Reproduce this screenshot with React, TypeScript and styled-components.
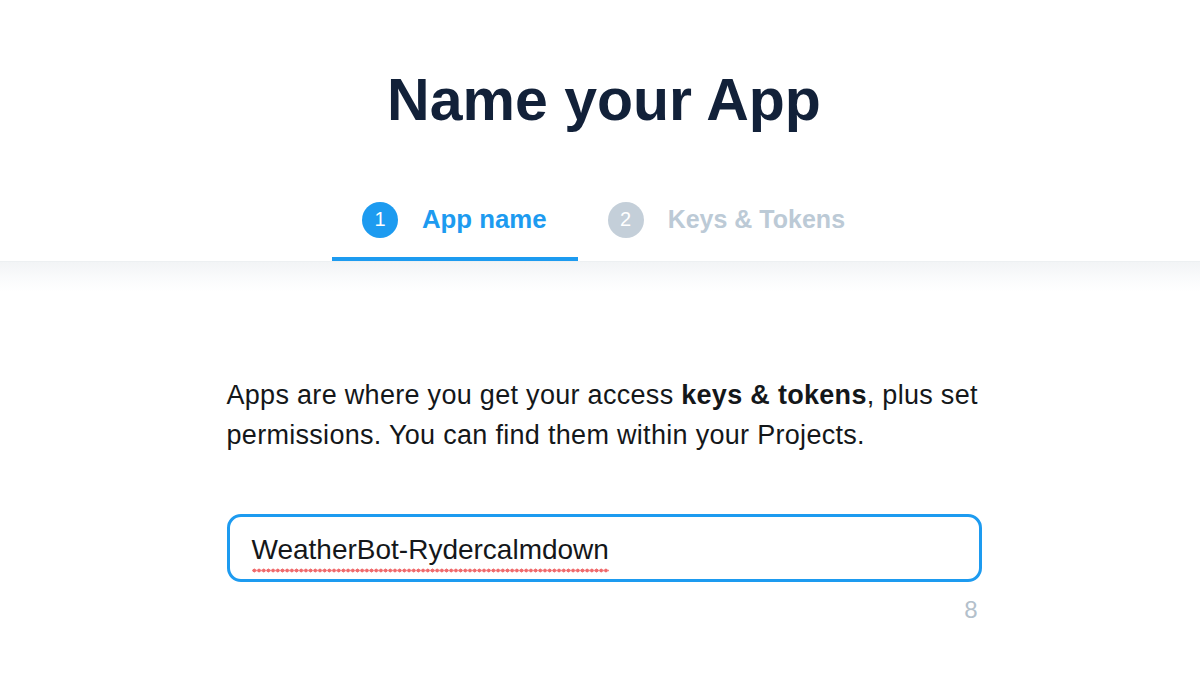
import React from "react";
import styled, { createGlobalStyle } from "styled-components";

const GlobalStyle = createGlobalStyle`
  html, body { margin: 0; padding: 0; background: #ffffff; }
  body { font-family: "Liberation Sans", Arial, sans-serif; -webkit-font-smoothing: antialiased; }
`;

const Page = styled.div`
  width: 1200px;
  min-height: 675px;
  display: flex;
  flex-direction: column;
`;

const Header = styled.header`
  display: flex;
  flex-direction: column;
  align-items: center;
  padding-top: 66px;
  padding-left: 8px;
  box-sizing: border-box;
  border-bottom: 1px solid #edf0f2;
`;

const Title = styled.h1`
  margin: 0;
  font-size: 59px;
  line-height: 68px;
  font-weight: 700;
  color: #122139;
`;

const Tabs = styled.nav`
  display: flex;
  margin-top: 52px;
`;

const Tab = styled.div<{ $active?: boolean }>`
  display: flex;
  align-items: center;
  gap: 24px;
  padding: 0 31px 4px 30px;
  height: 75px;
  box-sizing: border-box;
  border-bottom: 4px solid ${(p) => (p.$active ? "#1d9bf0" : "transparent")};
`;

const StepNum = styled.span<{ $active?: boolean }>`
  width: 36px;
  height: 36px;
  border-radius: 50%;
  background: ${(p) => (p.$active ? "#1d9bf0" : "#c4cfd9")};
  color: #ffffff;
  display: flex;
  align-items: center;
  justify-content: center;
  font-size: 20px;
  font-weight: 400;
`;

const TabLabel = styled.span<{ $active?: boolean }>`
  font-size: ${(p) => (p.$active ? "25.8px" : "25px")};
  font-weight: 700;
  color: ${(p) => (p.$active ? "#1d9bf0" : "#bccad6")};
`;

const Shade = styled.div`
  height: 30px;
  background: linear-gradient(to bottom, #f2f4f6 0%, #fafbfc 55%, #ffffff 100%);
`;

const Content = styled.main`
  width: 755px;
  margin-left: 8px;
  align-self: center;
  display: flex;
  flex-direction: column;
  padding-top: 83px;
`;

const Intro = styled.p`
  margin: 0;
  font-size: 27px;
  line-height: 40px;
  letter-spacing: 0.3px;
  color: #14171a;
  strong { font-weight: 700; }
`;

const Field = styled.div`
  margin-top: 59px;
  height: 68px;
  border: 3px solid #1d9bf0;
  border-radius: 14px;
  box-sizing: border-box;
  display: flex;
  align-items: center;
  padding: 3px 22px 0;
  font-size: 28px;
  color: #14171a;
`;

const Misspelled = styled.span`
  padding-bottom: 7px;
  margin-bottom: -7px;
  background-image: radial-gradient(circle, #f06b6d 1.8px, transparent 2.2px);
  background-size: 4.7px 5px;
  background-repeat: repeat-x;
  background-position: 0 100%;
`;

const Counter = styled.div`
  align-self: flex-end;
  margin-top: 14px;
  margin-right: 4px;
  font-size: 24px;
  color: #b3c0cb;
`;

export default function App() {
  return (
    <>
      <GlobalStyle />
      <Page>
        <Header>
          <Title>Name your App</Title>
          <Tabs>
            <Tab $active>
              <StepNum $active>1</StepNum>
              <TabLabel $active>App name</TabLabel>
            </Tab>
            <Tab>
              <StepNum>2</StepNum>
              <TabLabel>Keys &amp; Tokens</TabLabel>
            </Tab>
          </Tabs>
        </Header>
        <Shade />
        <Content>
          <Intro>
            Apps are where you get your access <strong>keys &amp; tokens</strong>, plus set
            permissions. You can find them within your Projects.
          </Intro>
          <Field role="textbox">
            <Misspelled>WeatherBot-Rydercalmdown</Misspelled>
          </Field>
          <Counter>8</Counter>
        </Content>
      </Page>
    </>
  );
}
